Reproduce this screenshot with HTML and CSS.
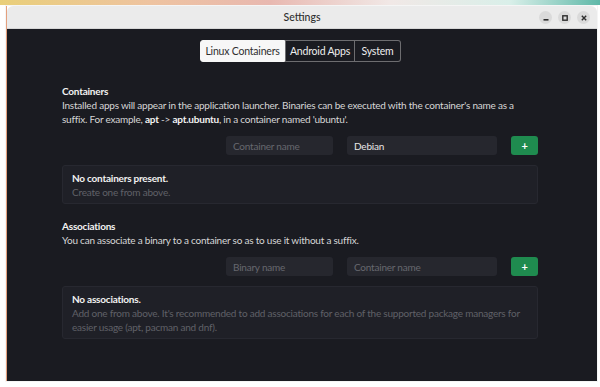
FILE: index.html
```html
<!DOCTYPE html>
<html>
<head>
<meta charset="utf-8">
<link rel="stylesheet" href="styles.css">
</head>
<body>
<div class="desktop">
  <div class="window">
    <div class="titlebar">
      <span class="title">Settings</span>
      <div class="wm-buttons">
        <span class="wm-btn"><svg width="12" height="12" viewBox="0 0 12 12"><rect x="3.5" y="7" width="5" height="1.6" fill="#2e2e2e"/></svg></span>
        <span class="wm-btn"><svg width="12" height="12" viewBox="0 0 12 12"><rect x="3.8" y="3.8" width="4.4" height="4.4" fill="none" stroke="#2e2e2e" stroke-width="1.4"/></svg></span>
        <span class="wm-btn"><svg width="12" height="12" viewBox="0 0 12 12"><path d="M3.8 3.8 L8.2 8.2 M8.2 3.8 L3.8 8.2" stroke="#2e2e2e" stroke-width="1.4"/></svg></span>
      </div>
    </div>
    <div class="content">
      <div class="tabs">
        <span class="tab active">Linux Containers</span>
        <span class="tab mid">Android Apps</span>
        <span class="tab last">System</span>
      </div>
      <div class="column">
        <section class="section">
          <div class="heading">Containers</div>
          <div class="desc">Installed apps will appear in the application launcher. Binaries can be executed with the container's name as a suffix. For example, <b>apt</b> -&gt; <b>apt.ubuntu</b>, in a container named 'ubuntu'.</div>
          <div class="form-row">
            <span class="input w1 placeholder">Container name</span>
            <span class="input w2">Debian</span>
            <span class="add-btn">+</span>
          </div>
          <div class="card">
            <div class="card-title">No containers present.</div>
            <div class="card-text">Create one from above.</div>
          </div>
        </section>
        <section class="section second">
          <div class="heading">Associations</div>
          <div class="desc">You can associate a binary to a container so as to use it without a suffix.</div>
          <div class="form-row">
            <span class="input w1 placeholder">Binary name</span>
            <span class="input w2 placeholder">Container name</span>
            <span class="add-btn">+</span>
          </div>
          <div class="card">
            <div class="card-title">No associations.</div>
            <div class="card-text">Add one from above. It's recommended to add associations for each of the supported package managers for easier usage (apt, pacman and dnf).</div>
          </div>
        </section>
      </div>
    </div>
  </div>
</div>
</body>
</html>
```
FILE: styles.css
```css
html, body {
  margin: 0;
  padding: 0;
}
body {
  width: 600px;
  height: 387px;
  overflow: hidden;
  background: #ffffff;
  font-family: Lato, "Noto Sans", sans-serif;
}
.desktop {
  height: 387px;
  box-sizing: border-box;
  padding: 6px 3px 6px 6px;
  background-image: linear-gradient(to right, #e9cf7a 0%, #eec3a0 25%, #e8b8b0 45%, #f1e8e6 65%, #d9efe9 85%, #5fb8a8 100%);
  background-size: 100% 5px;
  background-repeat: no-repeat;
}
.window {
  height: 375px;
  display: flex;
  flex-direction: column;
  border-left: 1px solid #e4a07e;
  box-sizing: border-box;
  box-shadow: 0 0 0 1px rgba(0,0,0,0.04);
}
.titlebar {
  height: 23px;
  flex: none;
  background: #ebebeb;
  border-bottom: 1px solid #d6d6d6;
  box-sizing: border-box;
  border-radius: 6px 6px 0 0;
  position: relative;
  display: flex;
  align-items: center;
  justify-content: center;
}
.title {
  font-size: 10.5px;
  color: #2e2e2e;
  font-weight: 500;
}
.wm-buttons {
  position: absolute;
  right: 7px;
  top: 5px;
  display: flex;
  gap: 6px;
}
.wm-btn {
  width: 13px;
  height: 13px;
  border-radius: 50%;
  background: #dadada;
  display: flex;
  align-items: center;
  justify-content: center;
}
.content {
  flex: 1;
  background: #1a1b21;
  display: flex;
  flex-direction: column;
  align-items: center;
  padding-top: 11px;
}
.tabs {
  display: flex;
  height: 22px;
  margin-left: -3px;
}
.tab {
  display: flex;
  align-items: center;
  justify-content: center;
  box-sizing: border-box;
  white-space: nowrap;
  font-size: 10.5px;
  letter-spacing: -0.2px;
  color: #eeeeee;
  border: 1px solid #6d6d70;
  border-left: none;
  background: #1a1b21;
}
.tab.active {
  width: 85px;
  background: #f7f7f7;
  color: #2f2f2f;
  border: 1px solid #f7f7f7;
  border-radius: 3px 0 0 3px;
}
.tab.mid {
  width: 70px;
  border-left: 1px solid #6d6d70;
}
.tab.last {
  width: 46px;
  border-radius: 0 3px 3px 0;
}
.column {
  width: 476px;
  margin-top: 22px;
  margin-left: -4px;
  color: #dcdcdc;
  font-size: 10px;
  letter-spacing: -0.22px;
  line-height: 14px;
}
.heading {
  font-weight: 700;
  color: #f2f2f2;
}
.desc {
  color: #d6d6d6;
}
.desc b {
  color: #f2f2f2;
}
.form-row {
  display: flex;
  justify-content: flex-end;
  gap: 14px;
  margin-top: 10px;
  height: 19px;
}
.input {
  height: 19px;
  box-sizing: border-box;
  background: #26272e;
  border-radius: 3px;
  padding-left: 7px;
  display: flex;
  align-items: center;
  color: #e6e6e6;
}
.input.placeholder {
  color: #67686e;
}
.w1 { width: 107px; }
.w2 { width: 150px; }
.add-btn {
  width: 27px;
  height: 19px;
  background: #1f8b4f;
  border-radius: 3px;
  color: #ffffff;
  display: flex;
  align-items: center;
  justify-content: center;
  font-weight: 700;
  font-size: 11px;
}
.card {
  margin-top: 10px;
  background: #1f2027;
  border: 1px solid #272830;
  border-radius: 3px;
  padding: 5px 9px 4px;
}
.card-title {
  font-weight: 700;
  color: #f2f2f2;
}
.card-text {
  color: #606168;
}
.section.second {
  margin-top: 15px;
}
```
